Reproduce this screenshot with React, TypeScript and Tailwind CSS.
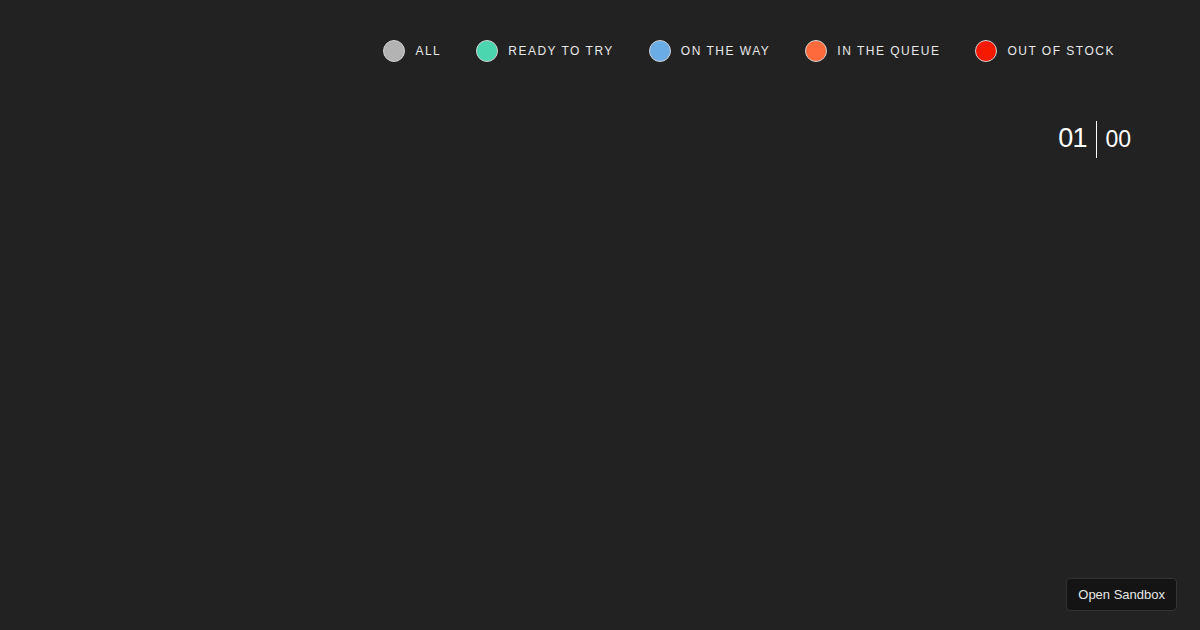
const filters = [
  { label: "ALL", color: "bg-[#b3b3b3]" },
  { label: "READY TO TRY", color: "bg-[#4cd6b0]" },
  { label: "ON THE WAY", color: "bg-[#6aace6]" },
  { label: "IN THE QUEUE", color: "bg-[#ff6a3d]" },
  { label: "OUT OF STOCK", color: "bg-[#f71800]" },
];

export default function App() {
  return (
    <div
      className="relative flex h-[630px] w-full flex-col bg-[#222222] text-white"
      style={{ fontFamily: '"Liberation Sans", Arial, sans-serif' }}
    >
      <nav className="flex justify-end gap-[35px] pr-[85px] pt-[40px]">
        {filters.map((f) => (
          <button key={f.label} className="flex items-center gap-[10px]">
            <span className={`h-[22px] w-[22px] rounded-full border border-[#d0d0d0] ${f.color}`} />
            <span className="text-[12px] tracking-[1.5px] text-[#e8e8e8]">{f.label}</span>
          </button>
        ))}
      </nav>

      <div className="mt-[59px] flex items-baseline justify-end pr-[69px]">
        <span className="text-[27px] leading-[35px] tracking-[-1px]">01</span>
        <span className="ml-[10px] mr-[8px] h-[37px] w-px self-center bg-white" />
        <span className="text-[23px] leading-[35px]">00</span>
      </div>

      <button className="absolute bottom-[19px] right-[23px] flex h-[33px] items-center rounded-[4px] border border-[#333333] bg-[#141414] px-[11px] text-[13px] text-[#e6e6e6]">
        Open Sandbox
      </button>
    </div>
  );
}
